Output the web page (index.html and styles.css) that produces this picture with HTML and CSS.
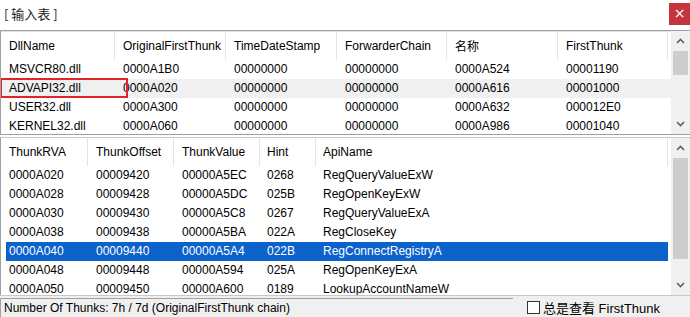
FILE: index.html
```html
<!DOCTYPE html>
<html>
<head>
<meta charset="utf-8">
<link rel="stylesheet" href="styles.css">
</head>
<body>
<div class="win">
  <div class="titlebar">
    <span class="title">[ 输入表 ]</span>
    <span class="close">×</span>
  </div>

  <div class="list list-top">
    <div class="grid">
      <div class="hdr">
        <div class="c t1">DllName</div>
        <div class="c t2">OriginalFirstThunk</div>
        <div class="c t3">TimeDateStamp</div>
        <div class="c t4">ForwarderChain</div>
        <div class="c t5">名称</div>
        <div class="c t6">FirstThunk</div>
        <div class="c fill"></div>
      </div>
      <div class="row">
        <div class="c t1">MSVCR80.dll</div><div class="c t2">0000A1B0</div><div class="c t3">00000000</div><div class="c t4">00000000</div><div class="c t5">0000A524</div><div class="c t6">00001190</div>
      </div>
      <div class="row hover">
        <div class="c t1">ADVAPI32.dll</div><div class="c t2">0000A020</div><div class="c t3">00000000</div><div class="c t4">00000000</div><div class="c t5">0000A616</div><div class="c t6">00001000</div>
        <span class="mark"></span>
      </div>
      <div class="row">
        <div class="c t1">USER32.dll</div><div class="c t2">0000A300</div><div class="c t3">00000000</div><div class="c t4">00000000</div><div class="c t5">0000A632</div><div class="c t6">000012E0</div>
      </div>
      <div class="row">
        <div class="c t1">KERNEL32.dll</div><div class="c t2">0000A060</div><div class="c t3">00000000</div><div class="c t4">00000000</div><div class="c t5">0000A986</div><div class="c t6">00001040</div>
      </div>
    </div>
    <div class="sbar">
      <div class="sbtn"><svg width="9" height="6" viewBox="0 0 9 6"><path d="M1 5 L4.5 1.5 L8 5" fill="none" stroke="#606060" stroke-width="1.6"/></svg></div>
      <div class="thumb thumb-top"></div>
      <div class="strack"></div>
      <div class="sbtn"><svg width="9" height="6" viewBox="0 0 9 6"><path d="M1 1 L4.5 4.5 L8 1" fill="none" stroke="#606060" stroke-width="1.6"/></svg></div>
    </div>
  </div>

  <div class="list list-bot">
    <div class="grid">
      <div class="hdr">
        <div class="c b1">ThunkRVA</div>
        <div class="c b2">ThunkOffset</div>
        <div class="c b3">ThunkValue</div>
        <div class="c b4">Hint</div>
        <div class="c b5">ApiName</div>
        <div class="c fill"></div>
      </div>
      <div class="brow"><div class="c b1">0000A020</div><div class="c b2">00009420</div><div class="c b3">00000A5EC</div><div class="c b4">0268</div><div class="c b5">RegQueryValueExW</div></div>
      <div class="brow"><div class="c b1">0000A028</div><div class="c b2">00009428</div><div class="c b3">00000A5DC</div><div class="c b4">025B</div><div class="c b5">RegOpenKeyExW</div></div>
      <div class="brow"><div class="c b1">0000A030</div><div class="c b2">00009430</div><div class="c b3">00000A5C8</div><div class="c b4">0267</div><div class="c b5">RegQueryValueExA</div></div>
      <div class="brow"><div class="c b1">0000A038</div><div class="c b2">00009438</div><div class="c b3">00000A5BA</div><div class="c b4">022A</div><div class="c b5">RegCloseKey</div></div>
      <div class="brow sel"><div class="c b1">0000A040</div><div class="c b2">00009440</div><div class="c b3">00000A5A4</div><div class="c b4">022B</div><div class="c b5">RegConnectRegistryA</div></div>
      <div class="brow"><div class="c b1">0000A048</div><div class="c b2">00009448</div><div class="c b3">00000A594</div><div class="c b4">025A</div><div class="c b5">RegOpenKeyExA</div></div>
      <div class="brow"><div class="c b1">0000A050</div><div class="c b2">00009450</div><div class="c b3">00000A600</div><div class="c b4">0189</div><div class="c b5">LookupAccountNameW</div></div>
    </div>
    <div class="sbar">
      <div class="sbtn"><svg width="9" height="6" viewBox="0 0 9 6"><path d="M1 5 L4.5 1.5 L8 5" fill="none" stroke="#606060" stroke-width="1.6"/></svg></div>
      <div class="thumb thumb-bot"></div>
      <div class="strack"></div>
      <div class="sbtn"><svg width="9" height="6" viewBox="0 0 9 6"><path d="M1 1 L4.5 4.5 L8 1" fill="none" stroke="#606060" stroke-width="1.6"/></svg></div>
    </div>
  </div>

  <div class="status">
    <div class="stext">Number Of Thunks: 7h / 7d (OriginalFirstThunk chain)</div>
    <label class="chk"><span class="box"></span><span class="ctext">总是查看 FirstThunk</span></label>
  </div>
</div>
</body>
</html>
```

FILE: styles.css
```css
* { box-sizing: border-box; }
html, body { margin: 0; padding: 0; background: #fff; }
body {
  font-family: "Liberation Sans", Arial, "Noto Sans CJK SC", sans-serif;
  font-size: 12px;
  color: #000;
  overflow: hidden;
}
.win { width: 690px; height: 317px; display: flex; flex-direction: column; }

.titlebar {
  height: 30px;
  display: flex;
  justify-content: space-between;
  align-items: flex-start;
  flex: none;
}
.title {
  font-family: "Noto Sans CJK SC", sans-serif;
  font-size: 13px;
  line-height: 28px;
  padding-left: 4px;
  color: #222;
}
.close {
  margin-top: 3px;
  width: 21px;
  height: 22px;
  background: #c4363e;
  color: #fff;
  font-size: 14px;
  line-height: 21px;
  text-align: center;
  font-family: "DejaVu Sans", sans-serif;
}

.list {
  display: flex;
  flex: none;
  overflow: hidden;
  border-left: 1px solid #a0a0a0;
}
.list-top {
  height: 105px;
  border-top: 1px solid #a0a0a0;
  box-shadow: inset 0 1px 0 #e3e3e3;
  border-bottom: 1px solid #a0a0a0;
}
.list-bot {
  margin-top: 2px;
  height: 158px;
  border-top: 1px solid #c8c8c8;
}
.grid { flex: 1; position: relative; overflow: hidden; padding-top: 1px; }
.list-bot .grid { padding-top: 0; }

.hdr { display: flex; height: 28px; align-items: center; }
.hdr .c { height: 28px; line-height: 28px; border-right: 1px solid #e5e5e5; }
.hdr .fill { flex: 1; border-right: none; }

.row, .brow { display: flex; height: 19px; line-height: 19px; position: relative; white-space: nowrap; }
.c { padding-left: 8px; white-space: nowrap; overflow: hidden; flex: none; }

.t1 { width: 114px; }
.t2 { width: 111px; }
.t3 { width: 111px; }
.t4 { width: 110px; }
.t5 { width: 111px; font-family: "Noto Sans CJK SC", sans-serif; }
.row .t5 { font-family: "Liberation Sans", Arial, sans-serif; }
.t6 { width: 110px; }

.row.hover { background: #f0f0f0; }
.mark {
  position: absolute;
  left: -1px;
  top: -1px;
  width: 128px;
  height: 20px;
  border: 2px solid #e0242a;
}

.b1 { width: 87px; }
.b2 { width: 86px; }
.b3 { width: 86px; }
.b4 { width: 56px; padding-left: 7px; }
.b5 { width: 352px; padding-left: 7px; }
.brow { margin-left: 5px; width: 662px; }
.brow .b1 { width: 82px; padding-left: 3px; }
.brow.sel { background: #0b62cb; color: #fff; }

.sbar {
  width: 19px;
  flex: none;
  background: #f0f0f0;
  display: flex;
  flex-direction: column;
}
.sbtn { height: 20px; display: flex; align-items: center; justify-content: center; flex: none; }
.strack { flex: 1; }
.thumb { background: #cdcdcd; margin: 0 2px; flex: none; }
.thumb-top { height: 24px; }
.thumb-bot { height: 101px; }

.status {
  flex: 1;
  background: #f0f0f0;
  border-top: 1px solid #c8c8c8;
  display: flex;
  align-items: flex-end;
}
.stext {
  width: 513px;
  height: 19px;
  line-height: 19px;
  border-top: 1px solid #a0a0a0;
  border-left: 1px solid #a0a0a0;
  padding-left: 3px;
  white-space: nowrap;
}
.chk { display: flex; align-items: center; margin-left: 14px; height: 19px; }
.box {
  width: 13px;
  height: 13px;
  border: 1px solid #333;
  background: #fff;
  margin-right: 3px;
}
.ctext { font-family: "Liberation Sans", "Noto Sans CJK SC", sans-serif; font-size: 13px; white-space: nowrap; }
```
